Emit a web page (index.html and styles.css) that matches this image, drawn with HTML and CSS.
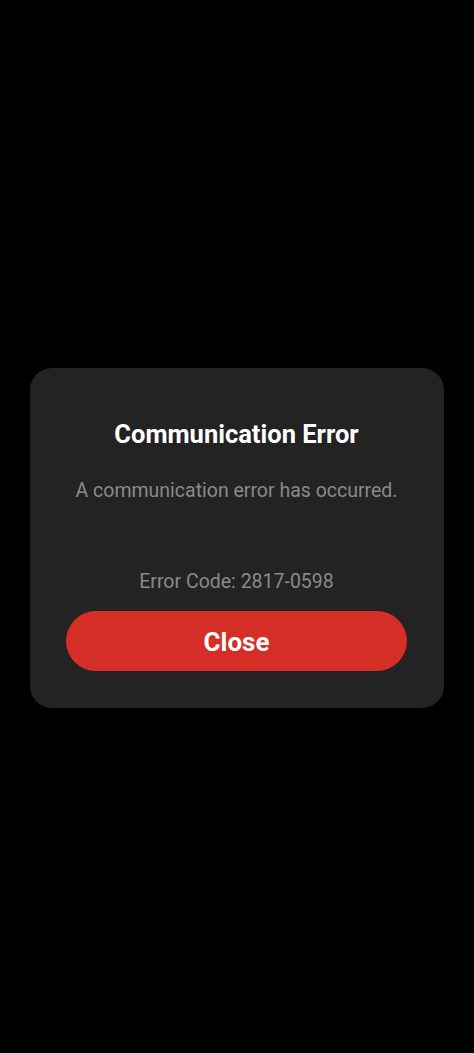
FILE: index.html
```html
<!DOCTYPE html>
<html lang="en">
  <head>
    <meta charset="UTF-8" />
    <meta name="viewport" content="width=device-width, initial-scale=1.0" />
    <title>Communication Error</title>
    <link rel="stylesheet" href="styles.css">
  </head>
  <body>
    <div class="screen">
      <div class="dialog">
        <h2 class="dialog-title">Communication Error</h2>
        <p class="dialog-message">A communication error has occurred.</p>
        <p class="dialog-code">Error Code: 2817-0598</p>
        <button class="close-btn">Close</button>
      </div>
    </div>
  </body>
</html>
```

FILE: styles.css
```css
body {
  margin: 0;
  padding: 0;
  background-color: #000;
  font-family: Roboto, "Noto Sans", sans-serif;
}

.screen {
  min-height: 100vh;
  box-sizing: border-box;
  padding-top: 23px;
  display: flex;
  justify-content: center;
  align-items: center;
}

.dialog {
  width: 414px;
  box-sizing: border-box;
  padding: 51px 37px 37px 36px;
  background-color: #232323;
  border-radius: 22px;
  display: flex;
  flex-direction: column;
  align-items: center;
  text-align: center;
}

.dialog-title {
  margin: 0;
  font-size: 25.5px;
  line-height: 30px;
  font-weight: 700;
  color: #fff;
}

.dialog-message {
  margin: 30px 0 0;
  font-size: 19.5px;
  line-height: 24px;
  color: #8a8a8a;
}

.dialog-code {
  margin: 67px 0 0;
  font-size: 19.5px;
  line-height: 24px;
  color: #8a8a8a;
}

.close-btn {
  margin-top: 17px;
  width: 100%;
  height: 60px;
  border: none;
  border-radius: 30px;
  background-color: #d42e27;
  color: #fff;
  font-family: inherit;
  font-size: 26px;
  line-height: 58px;
  font-weight: 700;
  padding: 2px 0 0;
  cursor: pointer;
}
```
